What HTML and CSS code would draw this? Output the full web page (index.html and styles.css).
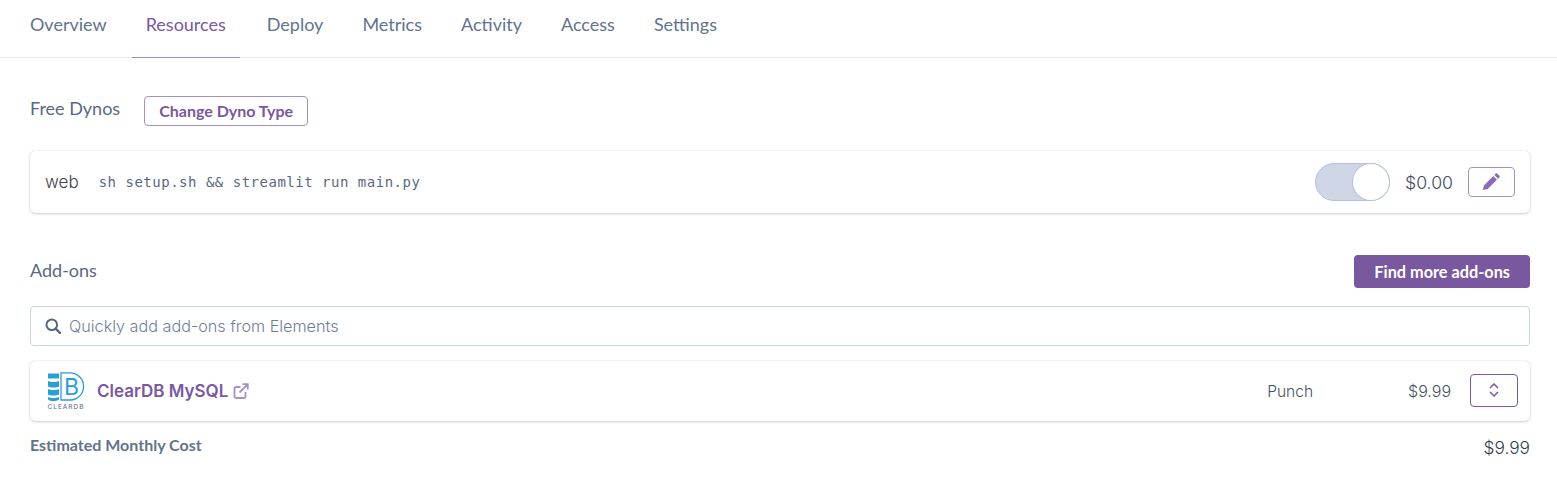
FILE: index.html
```html
<!DOCTYPE html>
<html lang="en">
<head>
    <meta charset="UTF-8">
    <meta name="viewport" content="width=device-width, initial-scale=1.0">
    <title>Resources</title>
    <link rel="stylesheet" href="styles.css">
</head>
<body>
    <nav class="tabs">
        <a class="tab">Overview</a>
        <a class="tab active">Resources</a>
        <a class="tab">Deploy</a>
        <a class="tab">Metrics</a>
        <a class="tab">Activity</a>
        <a class="tab">Access</a>
        <a class="tab">Settings</a>
    </nav>

    <main class="content">
        <div class="dyno-header">
            <h2 class="section-title dyno-title">Free Dynos</h2>
            <button class="btn-outline change-type">Change Dyno Type</button>
        </div>

        <div class="card dyno-card">
            <span class="dyno-name">web</span>
            <code class="dyno-command">sh setup.sh &amp;&amp; streamlit run main.py</code>
            <span class="spacer"></span>
            <span class="toggle"><span class="toggle-knob"></span></span>
            <span class="dyno-price">$0.00</span>
            <button class="btn-outline icon-btn edit-btn" aria-label="Edit">
                <svg class="edit-icon" width="18" height="18" viewBox="0 0 16 16"><path d="M0.800 15.200l0.900-4.200 8.300-8.300 3.300 3.300-8.300 8.300zM11 1.700l1.200-1.200a0.900 0.900 0 0 1 1.300 0l2 2a0.900 0.900 0 0 1 0 1.300l-1.200 1.200z" fill="#8b6bb5"/></svg>
            </button>
        </div>

        <div class="addons-header">
            <h2 class="section-title addons-title">Add-ons</h2>
            <button class="btn-primary">Find more add-ons</button>
        </div>

        <div class="search-box">
            <svg width="16" height="16" viewBox="0 0 16 16"><circle cx="6.800" cy="6.800" r="5.300" fill="none" stroke="#56667f" stroke-width="2"/><path d="M10.700 10.700l4.300 4.300" stroke="#56667f" stroke-width="2.400" stroke-linecap="round"/></svg>
            <span class="search-placeholder">Quickly add add-ons from Elements</span>
        </div>

        <div class="card addon-card">
            <svg class="addon-logo" width="38" height="38" viewBox="0 0 38 38">
                <path d="M1 1.500h11v5H1zM1 9c3 1.400 8 1.400 11 0v5.500c-3 1.400-8 1.400-11 0zM1 17c3 1.400 8 1.400 11 0v5.500c-3 1.400-8 1.400-11 0zM1 25c3 1.400 8 1.400 11 0v2.500c-3 2-8 2-11 0z" fill="#2a9fd6"/>
                <path d="M14 0.800h9a13.600 13.600 0 0 1 0 27.200h-9z" fill="none" stroke="#2a9fd6" stroke-width="1.300"/>
                <text x="24.500" y="23" text-anchor="middle" class="logo-letter">B</text>
                <text x="19" y="37" text-anchor="middle" class="logo-word">CLEARDB</text>
            </svg>
            <a class="addon-name">ClearDB MySQL</a>
            <svg class="external" width="16" height="16" viewBox="0 0 16 16"><path d="M12.500 9v4.500a1.500 1.500 0 0 1-1.500 1.500H3a1.500 1.500 0 0 1-1.500-1.500V5.500A1.500 1.500 0 0 1 3 4h4.500" fill="none" stroke="#a88fc7" stroke-width="1.800"/><path d="M6.500 9.500L14 2M9.500 1.200h5.300v5.300" fill="none" stroke="#a88fc7" stroke-width="1.800"/></svg>
            <span class="spacer"></span>
            <span class="addon-plan">Punch</span>
            <span class="addon-price">$9.99</span>
            <button class="btn-outline icon-btn plan-btn" aria-label="Change plan">
                <svg width="10" height="14" viewBox="0 0 10 14"><path d="M1 5l4-4 4 4M1 9l4 4 4-4" fill="none" stroke="#79589f" stroke-width="1.500"/></svg>
            </button>
        </div>

        <div class="cost-row">
            <span class="cost-label">Estimated Monthly Cost</span>
            <span class="cost-value">$9.99</span>
        </div>
    </main>
</body>
</html>
```

FILE: styles.css
```css
body {
    margin: 0;
    font-family: 'Lato', 'Open Sans', sans-serif;
    background-color: white;
    color: #596981;
}

button {
    font-family: inherit;
    cursor: pointer;
}

.tabs {
    display: flex;
    height: 57px;
    padding-left: 16px;
    border-bottom: 1px solid #e8ecf1;
}

.tab {
    display: flex;
    align-items: center;
    height: 48px;
    padding: 0 14px;
    margin-right: 11px;
    font-size: 18px;
    color: #62738d;
}

.tab.active {
    box-sizing: border-box;
    height: 58px;
    padding-bottom: 9px;
    margin-right: 13px;
    color: #79589f;
    border-bottom: 1px solid #a08bbd;
}

.content {
    padding: 0 27px 0 30px;
}

.section-title {
    margin: 0;
    font-size: 18px;
    font-weight: 400;
    color: #596981;
}

.dyno-title {
    padding-bottom: 6px;
}

.addons-title {
    padding-bottom: 4px;
}

.dyno-header {
    display: flex;
    align-items: center;
    gap: 24px;
    margin-top: 38px;
}

.btn-outline {
    background-color: white;
    border: 1px solid #a98fc9;
    border-radius: 4px;
    color: #79589f;
}

.change-type {
    height: 30px;
    padding: 0 14px 2px;
    font-size: 16px;
    font-weight: 700;
}

.card {
    display: flex;
    align-items: center;
    background-color: white;
    border-radius: 5px;
    box-shadow: 0 0 1px rgba(50, 60, 80, 0.35), 0 1px 3px rgba(50, 60, 80, 0.2);
}

.spacer {
    flex: 1;
}

.dyno-card {
    height: 62px;
    margin-top: 25px;
    padding: 0 15px;
}

.dyno-name {
    font-family: 'Inter', sans-serif;
    font-size: 17px;
    font-weight: 300;
    color: #3f3f44;
}

.dyno-command {
    margin-left: 20px;
    font-family: 'DejaVu Sans Mono', monospace;
    font-size: 14px;
    letter-spacing: 0.510px;
    color: #596981;
}

.toggle {
    display: flex;
    justify-content: flex-end;
    width: 73px;
    height: 36px;
    background-color: #cfd7e6;
    border: 1px solid #b4c1dc;
    border-radius: 19px;
}

.toggle-knob {
    width: 36px;
    height: 36px;
    background-color: white;
    border-radius: 50%;
    box-shadow: 0 0 0 1px #b4c1dc;
}

.dyno-price {
    margin-left: 15px;
    font-family: 'Inter', sans-serif;
    font-size: 17.700px;
    font-weight: 300;
    color: #3f4a5c;
}

.icon-btn {
    display: flex;
    align-items: center;
    justify-content: center;
    padding: 0;
}

.edit-btn {
    width: 47px;
    height: 30px;
    margin-left: 15px;
}

.edit-icon {
    margin-right: 2px;
}

.addons-header {
    display: flex;
    align-items: center;
    justify-content: space-between;
    margin-top: 42px;
}

.btn-primary {
    height: 33px;
    padding: 0 20px 1px;
    background-color: #79589f;
    border: none;
    border-radius: 4px;
    color: white;
    font-size: 16.300px;
    font-weight: 700;
}

.search-box {
    display: flex;
    align-items: center;
    gap: 8px;
    height: 38px;
    margin-top: 18px;
    padding-left: 14px;
    border: 1px solid #c9d3e6;
    border-radius: 4px;
}

.search-placeholder {
    font-family: 'Inter', sans-serif;
    font-size: 16.200px;
    font-weight: 300;
    color: #6f7f96;
}

.addon-card {
    height: 60px;
    margin-top: 15px;
    padding: 0 12px 0 17px;
}

.logo-letter {
    font-family: 'Inter', sans-serif;
    font-size: 23px;
    fill: #2a9fd6;
}

.logo-word {
    font-family: 'Inter', sans-serif;
    font-size: 6.500px;
    letter-spacing: 1px;
    fill: #56667f;
}

.addon-name {
    margin-left: 12px;
    font-family: 'Inter', sans-serif;
    font-size: 17px;
    font-weight: 600;
    color: #79589f;
}

.external {
    margin-left: 5px;
}

.addon-plan {
    font-family: 'Inter', sans-serif;
    font-size: 15.500px;
    font-weight: 300;
    color: #414f63;
}

.addon-price {
    margin-left: 95px;
    font-family: 'Inter', sans-serif;
    font-size: 16px;
    font-weight: 300;
    color: #414f63;
}

.plan-btn {
    width: 48px;
    height: 33px;
    margin-bottom: 2px;
    margin-left: 19px;
    border-color: #79589f;
}

.cost-row {
    display: flex;
    align-items: center;
    justify-content: space-between;
    margin-top: 14px;
}

.cost-label {
    padding-bottom: 5px;
    font-size: 16px;
    font-weight: 700;
    color: #62738d;
}

.cost-value {
    font-family: 'Inter', sans-serif;
    font-size: 17.300px;
    font-weight: 300;
    color: #2f3a4c;
}
```
